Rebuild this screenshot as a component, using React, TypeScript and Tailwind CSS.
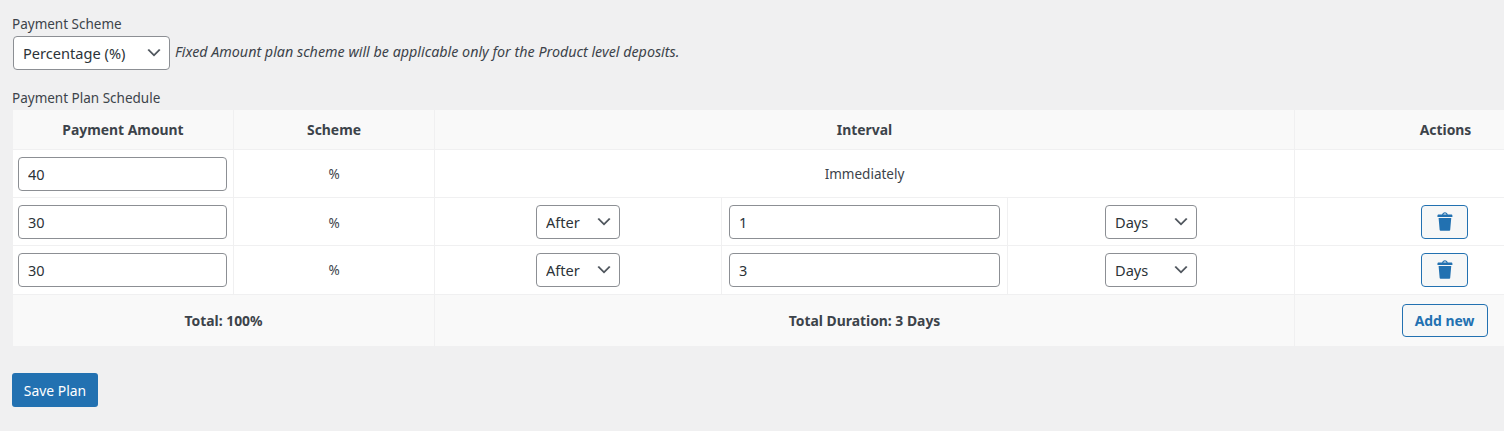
import React from "react";

const ArrowDown = () => (
  <svg viewBox="0 0 20 20" className="pointer-events-none absolute right-[6px] top-1/2 size-5 -translate-y-1/2 fill-[#50575e]">
    <path d="M5 6l5 5 5-5 1.500 1-6.500 6.500L3.500 7 5 6z" />
  </svg>
);

const TrashIcon = () => (
  <svg viewBox="0 0 20 20" className="ml-px size-[23px] fill-[#2271b1]">
    <path d="M12 4h3c.6 0 1 .4 1 1v1H3V5c0-.6.5-1 1-1h3c.2-1.100 1.300-2 2.500-2s2.300.9 2.500 2zM8 4h3c-.2-.6-.9-1-1.500-1S8.200 3.400 8 4zM4 7h11l-.9 10.100c0 .5-.5.900-1 .900H5.900c-.5 0-.9-.4-1-.9L4 7z" />
  </svg>
);

const Select = ({ label, className }: { label: string; className: string }) => (
  <div className={`relative inline-block h-[34px] align-middle ${className}`}>
    <select
      defaultValue={label}
      className="h-full w-full appearance-none rounded border border-[#8c8f94] bg-white pl-[9px] pr-6 pt-[2px] text-[14.6px] text-[#2c3338]"
    >
      <option>{label}</option>
    </select>
    <ArrowDown />
  </div>
);

const Input = ({ value }: { value: string }) => (
  <input
    defaultValue={value}
    className="block h-[34px] w-full rounded border border-[#8c8f94] bg-white px-[9px] text-[14.5px] text-[#2c3338]"
  />
);

const TrashButton = () => (
  <button className="mr-[2px] inline-flex h-[34px] w-[47px] items-center justify-center rounded border border-[#2271b1] bg-[#f6f7f7] align-middle">
    <TrashIcon />
  </button>
);

const headCell = "border border-[#f0f0f1] bg-[#f9f9f9] pt-[2px] text-[13.9px] font-bold text-center";
const bodyCell = "border border-[#f0f0f1] bg-white px-[5px] text-[13.5px] text-center";
const textCell = `${bodyCell} pt-[2px]`;

const rows = [
  { amount: "30", interval: "1", rowClass: "h-[48px]", percentClass: `${bodyCell} pt-[3px]` },
  { amount: "30", interval: "3", rowClass: "h-[49px] [&>td]:pb-px", percentClass: textCell },
];

export default function App() {
  return (
    <div className="h-[431px] overflow-hidden bg-[#f0f0f1] pl-3 font-['Noto_Sans','Open_Sans',sans-serif] text-[13.5px] text-[#3c434a]">
      <div className="pt-[14px] leading-5">Payment Scheme</div>
      <div className="mt-[2px] flex items-center pl-px">
        <Select label="Percentage (%)" className="w-[157px]" />
        <span className="-mt-[2px] ml-[5px] text-[14.3px] italic">Fixed Amount plan scheme will be applicable only for the Product level deposits.</span>
      </div>
      <div className="mt-[18px] leading-5">Payment Plan Schedule</div>
      <table className="mt-[1px] w-[1584px] table-fixed border-collapse">
        <colgroup>
          <col className="w-[221px]" />
          <col className="w-[201px]" />
          <col className="w-[287px]" />
          <col className="w-[286px]" />
          <col className="w-[287px]" />
          <col className="w-[302px]" />
        </colgroup>
        <thead>
          <tr className="h-[40px]">
            <th className={headCell}>Payment Amount</th>
            <th className={headCell}>Scheme</th>
            <th colSpan={3} className={headCell}>Interval</th>
            <th className={headCell}>Actions</th>
          </tr>
        </thead>
        <tbody>
          <tr className="h-[48px]">
            <td className={`${bodyCell} pr-[6px]`}><Input value="40" /></td>
            <td className={textCell}>%</td>
            <td colSpan={3} className={textCell}>Immediately</td>
            <td className={bodyCell}></td>
          </tr>
          {rows.map((row, idx) => (
            <tr key={idx} className={row.rowClass}>
              <td className={`${bodyCell} pr-[6px]`}><Input value={row.amount} /></td>
              <td className={row.percentClass}>%</td>
              <td className={bodyCell}><Select label="After" className="w-[84px]" /></td>
              <td className="border border-[#f0f0f1] bg-white px-[7px] text-center"><Input value={row.interval} /></td>
              <td className={bodyCell}><Select label="Days" className="w-[92px]" /></td>
              <td className={bodyCell}><TrashButton /></td>
            </tr>
          ))}
        </tbody>
        <tfoot>
          <tr className="h-[52px]">
            <th colSpan={2} className={headCell}>Total: 100%</th>
            <th colSpan={3} className={headCell}>Total Duration: 3 Days</th>
            <th className="border border-[#f0f0f1] bg-[#f9f9f9] text-center text-[13.9px]">
              <button className="mr-[2px] h-[33px] w-[86px] rounded border border-[#2271b1] bg-[#f6f7f7] pt-[2px] font-bold text-[#2271b1]">Add new</button>
            </th>
          </tr>
        </tfoot>
      </table>
      <button className="mt-[26px] block h-[34px] w-[86px] rounded-[3px] bg-[#2271b1] pt-[2px] text-[13.9px] text-white">Save Plan</button>
    </div>
  );
}
